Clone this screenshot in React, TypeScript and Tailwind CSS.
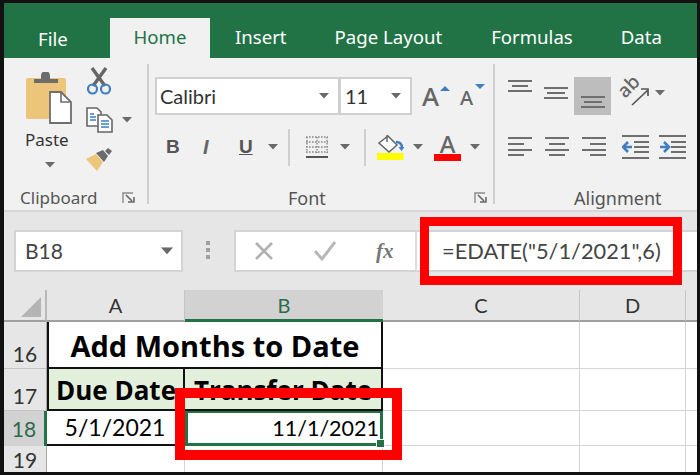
import React from "react";

const Caret = ({ className = "" }: { className?: string }) => (
  <svg width="10" height="6" viewBox="0 0 10 6" className={className}>
    <path d="M0 0h10L5 5.5z" fill="#6a6a6a" />
  </svg>
);

const Lines = ({ rows, w = 24, h = 20 }: { rows: [number, number, number][]; w?: number; h?: number }) => (
  <svg width={w} height={h} viewBox={`0 0 ${w} ${h}`}>
    {rows.map(([x1, x2, y], i) => (
      <rect key={i} x={x1} y={y} width={x2 - x1} height="2" fill="#6f6f6f" />
    ))}
  </svg>
);

const Launcher = ({ className = "" }: { className?: string }) => (
  <svg width="13" height="12" viewBox="0 0 13 12" className={className}>
    <path d="M1 11V1h10" fill="none" stroke="#8a8a8a" strokeWidth="1.4" />
    <path d="M4 3l6 6M6 10h6V5" fill="none" stroke="#666" strokeWidth="1.6" />
  </svg>
);

const PasteIcon = () => (
  <svg width="48" height="52" viewBox="0 0 48 52">
    <rect x="0" y="6" width="40" height="41" rx="2" fill="#ecc47a" />
    <path d="M8 11V7h7V3.5a4 4 0 0 1 9 0V7h8v4z" fill="#6d6d6d" />
    <path d="M24 20h11l10 10v21H24z" fill="#fff" stroke="#6e6e6e" strokeWidth="1.8" />
    <path d="M35 20v10h10" fill="none" stroke="#6e6e6e" strokeWidth="1.6" />
  </svg>
);

const CutIcon = () => (
  <svg width="26" height="28" viewBox="0 0 26 28">
    <path d="M6 1l13 18M20 1L7 19" stroke="#666" strokeWidth="3.4" fill="none" />
    <circle cx="6.5" cy="22" r="4.5" fill="none" stroke="#3f7fc0" strokeWidth="2.2" />
    <circle cx="19.5" cy="22" r="4.5" fill="none" stroke="#3f7fc0" strokeWidth="2.2" />
  </svg>
);

const CopyIcon = () => (
  <svg width="28" height="26" viewBox="0 0 28 26">
    <path d="M1 1h10l4 4v14H1z" fill="#fff" stroke="#666" strokeWidth="1.6" />
    <path d="M4 7h4M4 10h6M4 13h6" stroke="#3f7fc0" strokeWidth="1.4" />
    <path d="M12 8h9l5 5v12H12z" fill="#fff" stroke="#666" strokeWidth="1.6" />
    <path d="M15 14h8M15 17h8M15 20h8" stroke="#3f7fc0" strokeWidth="1.5" />
  </svg>
);

const BrushIcon = () => (
  <svg width="28" height="26" viewBox="0 0 28 26">
    <path d="M0 13l10-5 7 8-6 9z" fill="#ecc47a" />
    <path d="M10 7l7-3 5 6-4 6z" fill="#6b6b6b" />
    <path d="M19 5l3-3 4 3-3 4z" fill="#6b6b6b" />
  </svg>
);

const BordersIcon = () => (
  <svg width="24" height="24" viewBox="0 0 24 24">
    <path
      d="M1 2h22M1 7h22M1 12h22M1 17h22M2 2v16M12 2v16M22 2v16"
      stroke="#8a8a8a"
      strokeWidth="1.4"
      strokeDasharray="1.6 1.4"
      fill="none"
    />
    <path d="M1 22h22" stroke="#555" strokeWidth="2" />
  </svg>
);

const FillIcon = () => (
  <svg width="28" height="28" viewBox="0 0 28 28">
    <path d="M12 3l9 9-8 7-10-9z" fill="#fff" stroke="#666" strokeWidth="1.5" />
    <path d="M11 2v7" stroke="#666" strokeWidth="1.5" />
    <path d="M20 9c4 0 6 2 6 6" stroke="#3f7fc0" strokeWidth="2.4" fill="none" />
    <path d="M22.5 14h6l-3 4z" fill="#3f7fc0" />
    <rect x="1" y="20" width="26.5" height="7" fill="#ffff00" />
  </svg>
);

const OrientIcon = () => (
  <svg width="30" height="30" viewBox="0 0 30 30" className="overflow-visible">
    <text
      x="0"
      y="0"
      transform="translate(13 15) rotate(-45)"
      fontFamily="'Noto Sans', sans-serif"
      fontSize="19"
      fontWeight="500"
      fill="#666"
      textAnchor="middle"
    >
      ab
    </text>
    <path d="M12 29L28 14M21 13h7v7" stroke="#555" strokeWidth="1.7" fill="none" />
  </svg>
);

const IndentIcon = ({ dir }: { dir: "l" | "r" }) => (
  <svg width="28" height="24" viewBox="0 0 28 24">
    <path d="M0 1h27M12 7h15M12 12h15M12 17h15M0 23h27" stroke="#6f6f6f" strokeWidth="2" />
    {dir === "l" ? (
      <path d="M10 12H2M6 7l-5 5 5 5" stroke="#3f7fc0" strokeWidth="2.6" fill="none" />
    ) : (
      <path d="M1 12h8M5 7l5 5-5 5" stroke="#3f7fc0" strokeWidth="2.6" fill="none" />
    )}
  </svg>
);

const Tab = ({ label, cls }: { label: string; cls: string }) => (
  <div className={`pb-[7px] text-white leading-[28px] ${cls}`}>{label}</div>
);

export default function App() {
  const hdr = "bg-[#e6e6e6] border-r border-[#c4c4c4] border-b-2 border-b-[#a0a0a0] flex items-center justify-center text-[#333]";
  const rowH = "bg-[#e6e6e6] border-r border-[#a8a8a8] border-b border-b-[#c4c4c4] flex items-end justify-center text-[#333] text-[21px] leading-[29px]";
  const cell = "border-r border-b border-[#d4d4d4] bg-white";
  return (
    <div className="relative w-[700px] h-[475px] bg-[#111] pt-[3px] pl-[4px] pr-[3px] pb-[3px] overflow-hidden font-['Noto_Sans',sans-serif]">
      <div className="w-[693px] h-[469px] flex flex-col bg-white overflow-hidden">
        {/* Tabs */}
        <div className="h-[55px] shrink-0 bg-[#217346] flex items-end text-[18.6px]">
          <div className="pl-[34px] w-[106px] pb-[5px] text-white leading-[28px]">File</div>
          <div className="w-[100px] h-[40px] bg-[#f1f1f1] text-[#217346] flex items-center justify-center leading-[28px] pb-[2px]">
            Home
          </div>
          <Tab label="Insert" cls="ml-[25px]" />
          <Tab label="Page Layout" cls="ml-[48px]" />
          <Tab label="Formulas" cls="ml-[49px]" />
          <Tab label="Data" cls="ml-[48px]" />
        </div>

        {/* Ribbon */}
        <div className="h-[154px] shrink-0 bg-[#f1f1f1] border-b-2 border-[#d6d6d6] flex text-[#444]">
          {/* Clipboard */}
          <div className="w-[143px] shrink-0 relative flex flex-col">
            <div className="flex h-[122px]">
              <div className="w-[76px] pl-[22px] pt-[14px] flex flex-col items-start">
                <PasteIcon />
                <div className="text-[17px] leading-[24px] -ml-[1px] mt-[4px] text-[#333]">Paste</div>
                <Caret className="ml-[19px] mt-[10px]" />
              </div>
              <div className="flex flex-col items-start pl-[6px] pt-[9px]">
                <CutIcon />
                <div className="flex items-center mt-[12px]">
                  <CopyIcon />
                  <Caret className="ml-[8px]" />
                </div>
                <div className="mt-[13px]">
                  <BrushIcon />
                </div>
              </div>
            </div>
            <div className="flex items-center pl-[16px] pt-[7px] text-[17px] leading-[24px] text-[#555]">
              <span>Clipboard</span>
              <Launcher className="ml-[25px]" />
            </div>
          </div>
          <div className="w-[2px] h-[140px] mt-[6px] bg-[#cfcfcf] shrink-0" />

          {/* Font */}
          <div className="w-[344px] shrink-0 flex flex-col pl-[6px] pt-[19px]">
            <div className="flex items-center h-[38px]">
              <div className="w-[185px] h-[38px] bg-white border-2 border-[#cfcfcf] flex items-center justify-between pl-[3px] pr-[9px] font-['Lato',sans-serif] text-[20px] text-[#333]">
                Calibri
                <Caret />
              </div>
              <div className="w-[73px] h-[38px] -ml-[1px] bg-white border-2 border-[#cfcfcf] flex items-center justify-between pl-[4px] pr-[9px] font-['Lato',sans-serif] text-[20px] text-[#333]">
                11
                <Caret />
              </div>
              <div className="relative ml-[10px] w-[22px] text-[26px] leading-none font-medium text-[#666]">
                A
                <span className="absolute -right-[6px] top-[3px] w-0 h-0 border-x-[5px] border-x-transparent border-b-[5px] border-b-[#3f7fc0]" />
              </div>
              <div className="relative ml-[16px] w-[16px] text-[20px] leading-none font-medium text-[#666] mt-[4px]">
                A
                <span className="absolute -right-[9px] -top-[4px] w-0 h-0 border-x-[5px] border-x-transparent border-t-[5px] border-t-[#3f7fc0]" />
              </div>
            </div>
            <div className="flex items-center h-[38px] mt-[13px]">
              <span className="ml-[11px] w-[37px] text-[19px] font-bold text-[#555] font-['Liberation_Sans',sans-serif]">B</span>
              <span className="w-[36px] text-[20px] italic font-bold text-[#666] font-['Liberation_Sans',sans-serif]">I</span>
              <span className="w-[24px] text-[19px] font-bold underline text-[#555] font-['Liberation_Sans',sans-serif]">U</span>
              <Caret className="ml-[5px]" />
              <div className="ml-[10px] w-[2px] h-[37px] bg-[#cfcfcf]" />
              <div className="ml-[15px]">
                <BordersIcon />
              </div>
              <Caret className="ml-[11px]" />
              <div className="ml-[14px] w-[2px] h-[37px] bg-[#cfcfcf]" />
              <div className="ml-[10px]">
                <FillIcon />
              </div>
              <Caret className="ml-[9px]" />
              <div className="ml-[11px] w-[27px] h-[28px] flex flex-col items-center">
                <span className="text-[24px] leading-[22px] text-[#666] font-medium">A</span>
                <span className="w-[27px] h-[7px] bg-[#ff0000] mt-[-1px]" />
              </div>
              <Caret className="ml-[9px]" />
            </div>
            <div className="flex items-center mt-auto pl-[133px] pr-[6px] h-[24px] text-[18px] leading-[24px] text-[#555]">
              <span>Font</span>
              <Launcher className="ml-auto" />
            </div>
          </div>
          <div className="w-[2px] h-[140px] mt-[6px] bg-[#cfcfcf] shrink-0" />

          {/* Alignment */}
          <div className="flex-1 flex flex-col pl-[13px] pt-[19px] overflow-hidden">
            <div className="flex items-start h-[38px]">
              <div className="w-[36px] pt-[3px]">
                <Lines rows={[[0, 24, 0], [4, 20, 5], [0, 24, 10]]} h={14} />
              </div>
              <div className="w-[30px] pt-[10px]">
                <Lines rows={[[0, 24, 0], [3, 21, 5], [0, 24, 10]]} h={14} />
              </div>
              <div className="w-[37px] h-[38px] bg-[#bdbdbd] flex justify-center pt-[19px]">
                <Lines rows={[[0, 24, 0], [3, 21, 5], [0, 24, 10]]} h={14} />
              </div>
              <div className="ml-[9px] -mt-[1px]">
                <OrientIcon />
              </div>
              <Caret className="ml-[5px] mt-[13px]" />
            </div>
            <div className="flex items-center h-[38px] mt-[13px]">
              <div className="w-[37px]">
                <Lines rows={[[0, 24, 0], [0, 16, 6], [0, 24, 12], [0, 16, 17]]} />
              </div>
              <div className="w-[37px]">
                <Lines rows={[[0, 24, 0], [4, 20, 6], [0, 24, 12], [4, 20, 17]]} />
              </div>
              <div className="w-[40px]">
                <Lines rows={[[0, 24, 0], [8, 24, 6], [0, 24, 12], [8, 24, 17]]} />
              </div>
              <IndentIcon dir="l" />
              <div className="ml-[9px]">
                <IndentIcon dir="r" />
              </div>
            </div>
            <div className="mt-auto h-[24px] pl-[66px] flex items-center text-[18px] leading-[24px] text-[#555]">
              Alignment
            </div>
          </div>
        </div>

        {/* Formula bar */}
        <div className="h-[78px] shrink-0 bg-[#e6e6e6] flex items-start pt-[18px] text-[19px] text-[#444]">
          <div className="ml-[10px] w-[169px] h-[42px] bg-white border-2 border-[#d4d4d4] flex items-center justify-between pl-[9px] pr-[9px] font-['Lato',sans-serif] text-[21px] text-[#444]">
            B18
            <Caret className="scale-125" />
          </div>
          <div className="ml-[23px] mt-[11px] flex flex-col gap-[3px]">
            <span className="w-[4px] h-[4px] bg-[#a0a0a0]" />
            <span className="w-[4px] h-[4px] bg-[#a0a0a0]" />
            <span className="w-[4px] h-[4px] bg-[#a0a0a0]" />
          </div>
          <div className="ml-[24px] w-[183px] h-[42px] bg-white border-2 border-[#d4d4d4] border-r-[#dcdcdc] flex items-center">
            <svg width="22" height="22" viewBox="0 0 22 22" className="ml-[17px]">
              <path d="M3 3l16 16M19 3L3 19" stroke="#b0b0b0" strokeWidth="2.6" />
            </svg>
            <svg width="24" height="22" viewBox="0 0 24 22" className="ml-[38px] -mt-[1px]">
              <path d="M2 11l7 8L22 2" stroke="#b8b8b8" strokeWidth="3" fill="none" />
            </svg>
            <span className="ml-[39px] font-['Liberation_Serif',serif] italic font-bold text-[21px] leading-none text-[#777]">
              fx
            </span>
          </div>
          <div className="flex-1 h-[42px] bg-white border-y-2 border-[#d4d4d4] flex items-center pl-[25px] font-['Lato',sans-serif] text-[21.8px] whitespace-nowrap text-[#444]">
            =EDATE("5/1/2021",6)
          </div>
        </div>

        {/* Sheet */}
        <div className="flex-1 relative grid grid-cols-[43px_138px_198px_197px_106px_11px] grid-rows-[32px_47px_42px_35px_26px] font-['Lato',sans-serif] overflow-hidden">
          <div className="bg-[#e6e6e6] border-r-2 border-[#b8b8b8] border-b-2 border-b-[#a0a0a0] flex items-end justify-end pr-[4px] pb-[3px]">
            <svg width="20" height="20" viewBox="0 0 20 20">
              <path d="M20 0v20H0z" fill="#b4b4b4" />
            </svg>
          </div>
          <div className={`${hdr} text-[20px]`}>A</div>
          <div className="bg-[#d2d2d2] border-b-[3px] border-[#217346] flex items-center justify-center text-[20px] text-[#2f6a4c]">
            B
          </div>
          <div className={`${hdr} text-[20px]`}>C</div>
          <div className={`${hdr} text-[20px]`}>D</div>
          <div className="bg-[#e6e6e6] border-b-2 border-b-[#a0a0a0]" />

          <div className={rowH}>16</div>
          <div className="col-span-2 border-x-2 border-b-2 border-[#111] bg-white flex items-center justify-center text-[29px] font-bold text-black font-['Open_Sans',sans-serif] leading-none pt-[2px]">
            Add Months to Date
          </div>
          <div className={cell} />
          <div className={cell} />
          <div className="border-b border-[#d4d4d4] bg-white" />

          <div className={rowH}>17</div>
          <div className="bg-[#e2efda] border-l-2 border-r-2 border-b-2 border-[#111] flex items-center justify-center text-[26px] font-bold text-black font-['Open_Sans',sans-serif] whitespace-nowrap overflow-hidden pt-[2px]">
            <span className="leading-none">Due Date</span>
          </div>
          <div className="bg-[#e2efda] border-r-2 border-b-2 border-[#111] flex items-center justify-center text-[26px] font-bold text-black font-['Open_Sans',sans-serif] whitespace-nowrap overflow-hidden pt-[2px]">
            <span className="leading-none">Transfer Date</span>
          </div>
          <div className={cell} />
          <div className={cell} />
          <div className="border-b border-[#d4d4d4] bg-white" />

          <div className="bg-[#d2d2d2] border-r-[3px] border-[#217346] flex items-center justify-center text-[21px] text-[#2f6a4c]">18</div>
          <div className="bg-white border-r-2 border-b-2 border-[#111] flex items-center justify-center text-[23px] text-black">
            5/1/2021
          </div>
          <div className="relative bg-white border-[3px] border-[#217346] border-t-2 flex items-center justify-end pr-[1px] text-[21.5px] text-black">
            11/1/2021
            <span className="absolute -right-[5px] -bottom-[5px] w-[9px] h-[9px] bg-[#217346] border border-white" />
          </div>
          <div className={cell} />
          <div className={cell} />
          <div className="border-b border-[#d4d4d4] bg-white" />

          <div className="bg-[#e6e6e6] border-r border-[#a8a8a8] flex items-start justify-center text-[21px] leading-[27px] text-[#333]">19</div>
          <div className="border-r border-[#d4d4d4] bg-white" />
          <div className="border-r border-[#d4d4d4] bg-white" />
          <div className="border-r border-[#d4d4d4] bg-white" />
          <div className="border-r border-[#d4d4d4] bg-white" />
          <div className="bg-white" />
        </div>
      </div>

      {/* Red annotation boxes */}
      <div className="absolute left-[420px] top-[217px] w-[262px] h-[68px] border-[9px] border-[#ff0000]" />
      <div className="absolute left-[175px] top-[388px] w-[227px] h-[72px] border-[10px] border-[#ff0000]" />
    </div>
  );
}
